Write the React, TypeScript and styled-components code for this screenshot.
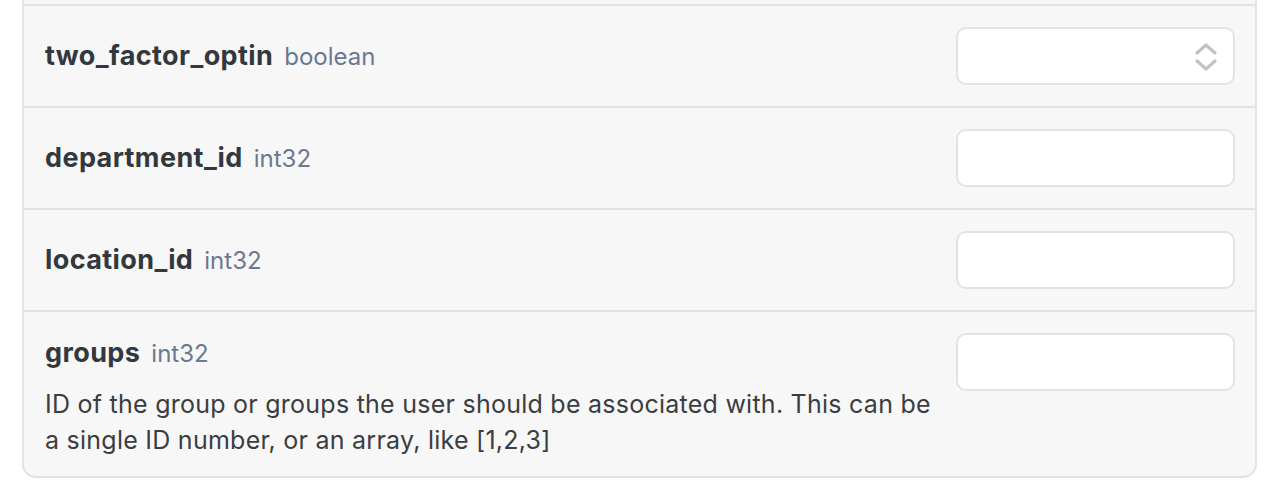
import styled, { createGlobalStyle } from "styled-components";

const GlobalStyle = createGlobalStyle`
    html, body {
        margin: 0;
        padding: 0;
        background: #ffffff;
    }
    body {
        font-family: Inter, "Liberation Sans", sans-serif;
        -webkit-font-smoothing: antialiased;
    }
`;

const Page = styled.div`
    width: 1278px;
    padding: 0 21px 0 22px;
    box-sizing: border-box;
`;

const Card = styled.div`
    background: #f7f7f7;
    border: 2px solid #e2e2e2;
    border-top: none;
    border-radius: 0 0 14px 14px;
    padding-top: 4px;
`;

const Row = styled.div<{ $top?: boolean }>`
    display: flex;
    align-items: ${(p) => (p.$top ? "flex-start" : "center")};
    gap: 24px;
    padding: 21px 20px ${(p) => (p.$top ? "18px" : "21px")} 21px;
    border-top: 2px solid #e2e2e2;
    min-height: 58px;
`;

const Info = styled.div`
    flex: 1;
    min-width: 0;
`;

const Label = styled.div`
    font-size: 27px;
    line-height: 40px;
    color: #32383e;
    font-weight: 700;
    letter-spacing: 0.4px;
`;

const Type = styled.span`
    font-size: 24px;
    font-weight: 400;
    color: #6a7890;
    margin-left: 11px;
    letter-spacing: 0;
`;

const Description = styled.p`
    margin: 12px 0 0;
    font-size: 25px;
    line-height: 36px;
    letter-spacing: 0.25px;
    color: #3b3d40;
`;

const Field = styled.div`
    position: relative;
    flex: 0 0 279px;
    height: 58px;
    box-sizing: border-box;
    background: #ffffff;
    border: 2px solid #e3e3e3;
    border-radius: 10px;
`;

const Chevrons = styled.svg`
    position: absolute;
    right: 14px;
    top: 13px;
`;

type Param = {
    name: string;
    type: string;
    select?: boolean;
    description?: string;
};

const params: Param[] = [
    { name: "two_factor_optin", type: "boolean", select: true },
    { name: "department_id", type: "int32" },
    { name: "location_id", type: "int32" },
    {
        name: "groups",
        type: "int32",
        description:
            "ID of the group or groups the user should be associated with. This can be a single ID number, or an array, like [1,2,3]",
    },
];

function App() {
    return (
        <Page>
            <GlobalStyle />
            <Card>
                {params.map((p) => (
                    <Row key={p.name} $top={!!p.description}>
                        <Info>
                            <Label>
                                {p.name}
                                <Type>{p.type}</Type>
                            </Label>
                            {p.description && <Description>{p.description}</Description>}
                        </Info>
                        <Field>
                            {p.select && (
                                <Chevrons width="26" height="30" viewBox="0 0 26 30" fill="none">
                                    <path
                                        d="M4 11 L13 3 L22 11 M4 19 L13 27 L22 19"
                                        stroke="#c2c2c2"
                                        strokeWidth="3.2"
                                        strokeLinecap="round"
                                        strokeLinejoin="round"
                                    />
                                </Chevrons>
                            )}
                        </Field>
                    </Row>
                ))}
            </Card>
        </Page>
    );
}

export default App;
